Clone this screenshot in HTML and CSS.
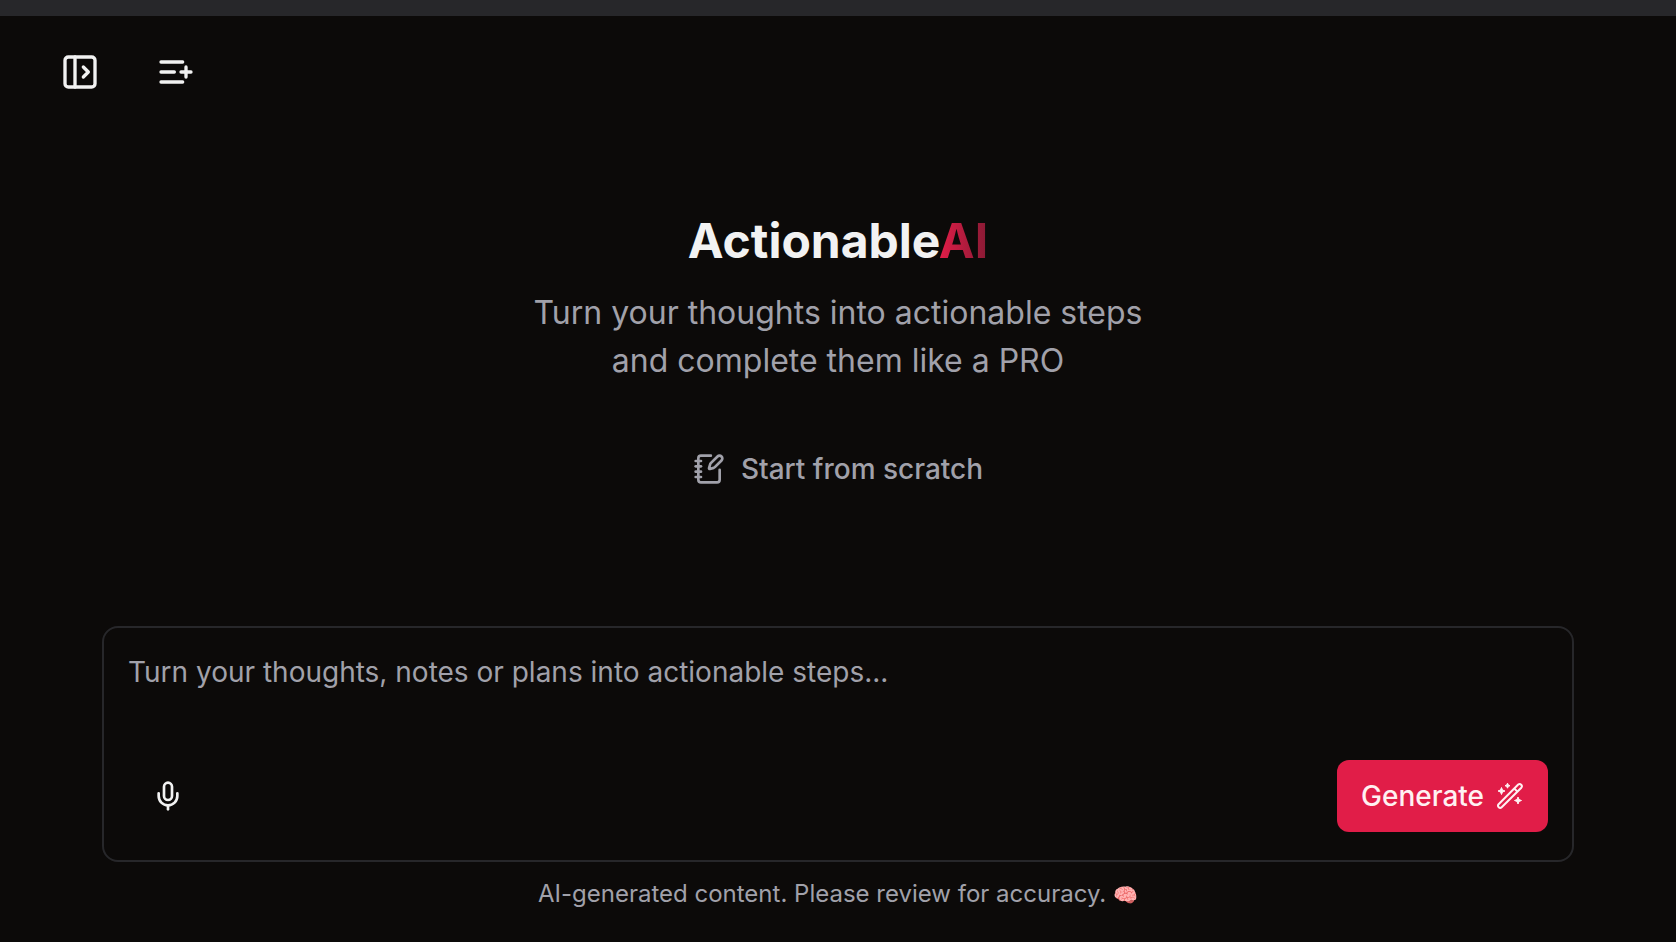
FILE: index.html
```html
<!DOCTYPE html>
<html lang="en">
<head>
  <meta charset="UTF-8">
  <meta name="viewport" content="width=device-width, initial-scale=1.0">
  <title>ActionableAI</title>
  <link rel="stylesheet" href="styles.css">
</head>
<body>

  <header class="toolbar">
    <button type="button" class="icon-button" aria-label="Open sidebar">
      <svg class="icon icon-lg" viewBox="0 0 24 24">
        <rect x="3" y="3" width="18" height="18" rx="2"/>
        <path d="M9 3v18"/>
        <path d="m14 9 3 3-3 3"/>
      </svg>
    </button>
    <button type="button" class="icon-button" aria-label="New list">
      <svg class="icon icon-lg" viewBox="0 0 24 24">
        <path d="M11 12H3"/>
        <path d="M16 6H3"/>
        <path d="M16 18H3"/>
        <path d="M18 9v6"/>
        <path d="M21 12h-6"/>
      </svg>
    </button>
  </header>

  <main class="main">
    <section class="hero">
      <h1 class="title">Actionable<span class="title-accent">AI</span></h1>
      <p class="subtitle">Turn your thoughts into actionable steps<br>and complete them like a PRO</p>
      <button type="button" class="scratch-button">
        <svg class="icon icon-md" viewBox="0 0 24 24">
          <path d="M13.4 2H6a2 2 0 0 0-2 2v16a2 2 0 0 0 2 2h12a2 2 0 0 0 2-2v-7.4"/>
          <path d="M2 6h4"/>
          <path d="M2 10h4"/>
          <path d="M2 14h4"/>
          <path d="M2 18h4"/>
          <path d="M21.378 5.626a1 1 0 1 0-3.004-3.004l-5.01 5.012a2 2 0 0 0-.506.854l-.837 2.87a.5.5 0 0 0 .62.62l2.87-.837a2 2 0 0 0 .854-.506z"/>
        </svg>
        Start from scratch
      </button>
    </section>

    <form class="prompt">
      <textarea class="prompt-input" aria-label="Your thoughts" placeholder="Turn your thoughts, notes or plans into actionable steps..."></textarea>
      <div class="prompt-actions">
        <button type="button" class="icon-button" aria-label="Record voice">
          <svg class="icon icon-md" viewBox="0 0 24 24">
            <rect x="9" y="2" width="6" height="13" rx="3"/>
            <path d="M19 10v2a7 7 0 0 1-14 0v-2"/>
            <path d="M12 19v3"/>
          </svg>
        </button>
        <button type="button" class="generate-button">
          Generate
          <svg class="icon-wand" viewBox="0 0 28 28">
            <path class="wand" d="M2.6 22.2 22.2 2.6a2.2 2.2 0 0 1 3.1 3.1L5.7 25.3a2.2 2.2 0 0 1-3.1-3.1z"/>
            <path class="wand" d="m18.3 6.5 3.1 3.1"/>
            <path class="spark" d="m5.5 5.5 1 2.5 2.5 1-2.5 1-1 2.5-1-2.5-2.5-1 2.500-1z"/>
            <path class="spark" d="m11.500 1.200.8 1.700 1.700.8-1.700.8-.8 1.700-.8-1.700-1.700-.8 1.700-.8z"/>
            <path class="spark" d="m22 15 1 2.500 2.500 1-2.500 1-1 2.500-1-2.500-2.500-1 2.500-1z"/>
          </svg>
        </button>
      </div>
    </form>
  </main>

  <footer class="footer">AI-generated content. Please review for accuracy. <span class="emoji">🧠</span></footer>

</body>
</html>
```
FILE: styles.css
```css
* {
  box-sizing: border-box;
}

body {
  margin: 0;
  min-height: 100vh;
  display: flex;
  flex-direction: column;
  border-top: 16px solid #27272a;
  background: #0c0a09;
  color: #f2f2f2;
  font-family: Inter, sans-serif;
}

button {
  display: flex;
  align-items: center;
  border: 0;
  border-radius: 12px;
  background: none;
  color: inherit;
  font: 500 28px/40px Inter, sans-serif;
  cursor: pointer;
}

/* icons */
.icon {
  fill: none;
  stroke: currentColor;
  stroke-width: 2;
  stroke-linecap: round;
  stroke-linejoin: round;
}

.icon-lg {
  width: 40px;
  height: 40px;
}

.icon-md {
  width: 32px;
  height: 32px;
}

.icon-button {
  justify-content: center;
  width: 80px;
  height: 80px;
  padding: 0;
}

/* top */
.toolbar {
  display: flex;
  gap: 16px;
  padding: 16px 40px;
}

.main {
  flex: 1;
  display: flex;
  flex-direction: column;
  justify-content: space-between;
  padding: 0 102px;
}

.hero {
  display: flex;
  flex-direction: column;
  align-items: center;
  padding-top: 81px;
  text-align: center;
}

.title {
  margin: 0;
  font-size: 48px;
  line-height: 64px;
  font-weight: 700;
}

.title-accent {
  background: linear-gradient(to right, #e11d48, #881a34);
  background-clip: text;
  -webkit-background-clip: text;
  color: transparent;
}

.subtitle {
  margin: 16px 0 0;
  color: #a1a1aa;
  font-size: 32px;
  line-height: 48px;
}

.scratch-button {
  gap: 16px;
  margin-top: 48px;
  padding: 16px 32px;
  color: #a1a1aa;
}

/* prompt box */
.prompt {
  padding: 24px;
  border: 2px solid #27272a;
  border-radius: 16px;
}

.prompt-input {
  display: block;
  width: 100%;
  height: 104px;
  padding: 0;
  border: 0;
  outline: 0;
  resize: none;
  background: none;
  color: inherit;
  font: 400 28px/40px Inter, sans-serif;
}

.prompt-input::placeholder {
  color: #a1a1aa;
}

.prompt-actions {
  display: flex;
  align-items: center;
  justify-content: space-between;
}

.generate-button {
  gap: 12px;
  height: 72px;
  padding: 0 24px;
  background: #e11d48;
  color: #fff1f2;
}

.icon-wand {
  width: 28px;
  height: 28px;
}

.wand {
  fill: none;
  stroke: currentColor;
  stroke-width: 2;
}

.spark {
  fill: currentColor;
  stroke: currentColor;
  stroke-linejoin: round;
}

.footer {
  padding: 16px 24px 32px;
  color: #a1a1aa;
  font-size: 24px;
  line-height: 32px;
  text-align: center;
}

.emoji {
  font-size: 20px;
  line-height: 20px;
}
```
